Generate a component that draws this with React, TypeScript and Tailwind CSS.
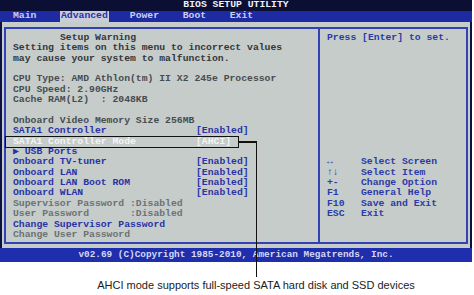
import React from "react";

const MONO = "font-['Liberation_Mono','DejaVu_Sans_Mono',monospace]";

type Line = {
  label: string;
  value?: string;
  tone: "dark" | "mid" | "blue" | "grey" | "white";
};

const toneClass: Record<Line["tone"], string> = {
  dark: "text-[#33373a]",
  mid: "text-[#474c4f]",
  blue: "text-[#2933a6]",
  grey: "text-[#6c7274]",
  white: "text-[#f3f5f5]",
};

const settings: (Line | null)[] = [
  { label: "CPU Type: AMD Athlon(tm) II X2 245e Processor", tone: "mid" },
  { label: "CPU Speed: 2.90GHz", tone: "mid" },
  { label: "Cache RAM(L2)  : 2048KB", tone: "mid" },
  null,
  { label: "Onboard Video Memory Size 256MB", tone: "mid" },
  { label: "SATA1 Controller", value: "[Enabled]", tone: "blue" },
  { label: "SATA1 Controller Mode", value: "[AHCI]", tone: "white" },
  { label: "\u25B6 USB Ports", tone: "blue" },
  { label: "Onboard TV-tuner", value: "[Enabled]", tone: "blue" },
  { label: "Onboard LAN", value: "[Enabled]", tone: "blue" },
  { label: "Onboard LAN Boot ROM", value: "[Enabled]", tone: "blue" },
  { label: "Onboard WLAN", value: "[Enabled]", tone: "blue" },
  { label: "Supervisor Password :Disabled", tone: "grey" },
  { label: "User Password       :Disabled", tone: "grey" },
  { label: "Change Supervisor Password", tone: "blue" },
  { label: "Change User Password", tone: "grey" },
];

const keys = [
  ["\u2194", "Select Screen"],
  ["\u2191\u2193", "Select Item"],
  ["+-", "Change Option"],
  ["F1", "General Help"],
  ["F10", "Save and Exit"],
  ["ESC", "Exit"],
];

function SettingRow({ line }: { line: Line | null }) {
  if (!line) return <div className="h-[10.37px]" />;
  return (
    <div className={`flex h-[10.37px] items-center whitespace-pre ${toneClass[line.tone]}`}>
      <span className="w-[183px] shrink-0">{line.label}</span>
      {line.value && <span>{line.value}</span>}
    </div>
  );
}

export default function App() {
  return (
    <div className={`relative h-[295px] w-[474px] overflow-hidden bg-white ${MONO} text-[9.75px] font-bold leading-[10.37px]`}>
      {/* BIOS screen */}
      <div className="flex h-[262px] w-[472px] flex-col bg-[#0c1140]">
        {/* Title */}
        <div className="flex h-[11px] items-center justify-center bg-[#0b0f33] text-[#eef0fa]">
          BIOS SETUP UTILITY
        </div>

        {/* Menu tabs */}
        <div className="flex h-[11px] items-center bg-[#1d2aa2] text-[#c9cfee]">
          <span className="ml-[13px]">Main</span>
          <span className="ml-[23.6px] bg-[#c9cdd9] px-[1px] text-[#2433a8]">Advanced</span>
          <span className="ml-[21px]">Power</span>
          <span className="ml-[23.7px]">Boot</span>
          <span className="ml-[23.6px]">Exit</span>
        </div>

        {/* Main panel */}
        <div className="mx-[2px] flex h-[226px] bg-[#c5ccca] px-[2px] pb-[4px] pt-[5px]">
          <div className="flex flex-1 border-[2px] border-[#3242b4]">
            {/* Left column */}
            <div className="w-[314px] border-r-[2px] border-[#3242b4] pl-[7px] pt-[4px]">
              <div className="ml-[47px] text-[#33373a]">Setup Warning</div>
              <div className="text-[#33373a]">Setting items on this menu to incorrect values</div>
              <div className="text-[#33373a]">may cause your system to malfunction.</div>
              <div className="h-[10.37px]" />
              {settings.map((l, i) => (
                <SettingRow key={i} line={l} />
              ))}
            </div>

            {/* Right column */}
            <div className="flex-1 pl-[7px] pt-[4px] text-[#2b3aa8]">
              <div>Press [Enter] to set.</div>
              <div className="h-[114px]" />
              {keys.map(([k, d]) => (
                <div key={k} className="flex h-[10.37px] items-center">
                  <span className="w-[34px] shrink-0">{k}</span>
                  <span>{d}</span>
                </div>
              ))}
            </div>
          </div>
        </div>

        {/* Footer */}
        <div className="flex h-[14px] items-center justify-center bg-[#1f2eac] text-[9.4px] text-[#d4d9f2]">
          v02.69 (C)Copyright 1985-2010, American Megatrends, Inc.
        </div>
      </div>

      {/* Caption */}
      <div className="mt-[16px] w-[512px] text-center font-['Liberation_Sans',Arial,sans-serif] text-[11px] font-normal leading-[14px] text-[#1c1c1c]">
        AHCI mode supports full-speed SATA hard disk and SSD devices
      </div>

      {/* Callout annotation */}
      <div className="absolute left-[5px] top-[136px] h-[12px] w-[234px] border-[1.5px] border-[#111]" />
      <div className="absolute left-[238px] top-[141px] h-[1.5px] w-[19px] bg-[#111]" />
      <div className="absolute left-[255.5px] top-[141px] h-[136px] w-[1.5px] bg-[#111]" />
    </div>
  );
}
